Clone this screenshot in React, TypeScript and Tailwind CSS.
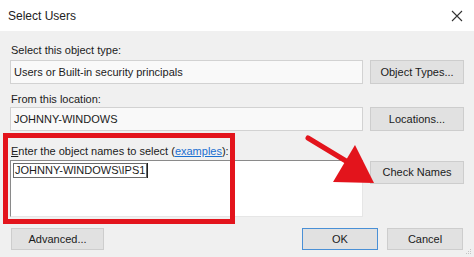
import React from "react";

const font = { fontFamily: '"Liberation Sans", Arial, sans-serif' };

const DialogButton: React.FC<{ label: string; className?: string; primary?: boolean }> = ({
  label,
  className = "",
  primary = false,
}) => (
  <div
    className={`flex items-center justify-center bg-[#e1e1e1] text-[11px] text-[#1b1b1b] border ${
      primary ? "border-[#4a90d6]" : "border-[#cdcdcd]"
    } ${className}`}
  >
    {label}
  </div>
);

const App: React.FC = () => {
  return (
    <div className="relative w-[474px] h-[257px] overflow-hidden bg-[#f0f0f0]" style={font}>
      {/* Title bar */}
      <div className="h-[31px] bg-white flex items-center justify-between pl-[8px] pr-[10px]">
        <span className="text-[12px] text-[#222]">Select Users</span>
        <svg width="12" height="12" viewBox="0 0 12 12" className="mr-[1px]">
          <path d="M1 1 L11 11 M11 1 L1 11" stroke="#333" strokeWidth="1.1" />
        </svg>
      </div>

      {/* Body */}
      <div className="flex flex-col px-[10px] pt-[12px]">
        <div className="h-[14px] leading-[14px] text-[11px] text-[#1b1b1b] pl-[1px]">
          Select this object type:
        </div>
        <div className="mt-[3px] flex gap-[7px] h-[24px]">
          <div className="w-[353px] bg-[#f9f9f9] border border-[#d2d2d2] flex items-center pl-[3px] text-[11px] text-[#1b1b1b]">
            Users or Built-in security principals
          </div>
          <DialogButton label="Object Types..." className="w-[94px]" />
        </div>

        <div className="mt-[8px] h-[14px] leading-[14px] text-[11px] text-[#1b1b1b] pl-[1px]">
          From this location:
        </div>
        <div className="mt-[1px] flex gap-[7px] h-[24px]">
          <div className="w-[353px] bg-[#f9f9f9] border border-[#d2d2d2] flex items-center pl-[3px] text-[11px] text-[#1b1b1b]">
            JOHNNY-WINDOWS
          </div>
          <DialogButton label="Locations..." className="w-[94px]" />
        </div>

        <div className="mt-[13px] h-[14px] leading-[14px] text-[11px] text-[#1b1b1b] pl-[1px]">
          <span className="underline">E</span>nter the object names to select (
          <span className="text-[#1a6fd1] underline">examples</span>):
        </div>
        <div className="mt-[2px] flex gap-[7px] items-start">
          <div className="w-[353px] h-[57px] bg-white border-t border-l border-t-[#8a8a8a] border-l-[#8a8a8a] border-r border-b border-r-[#e6e6e6] border-b-[#e6e6e6] pl-[2px] pt-[2px]">
            <div className="flex items-center">
              <span className="border border-[#6b6b6b] px-[1px] h-[15px] leading-[13px] text-[11px] text-[#1b1b1b]">
                JOHNNY-WINDOWS\IPS1
              </span>
              <span className="w-[1px] h-[15px] bg-[#222]" />
            </div>
          </div>
          <DialogButton label="Check Names" className="w-[94px] h-[23px] mt-[1px]" />
        </div>

        <div className="mt-[11px] flex items-center h-[22px]">
          <DialogButton label="Advanced..." className="w-[93px] h-[22px] ml-[1px]" />
          <div className="flex-1" />
          <DialogButton label="OK" primary className="w-[76px] h-[22px]" />
          <DialogButton label="Cancel" className="w-[76px] h-[22px] ml-[9px] mr-[1px]" />
        </div>
      </div>

      {/* Resize grip */}
      <svg className="absolute right-[2px] bottom-[2px]" width="6" height="6" viewBox="0 0 6 6">
        <rect x="4" y="0" width="1" height="1" fill="#c4c4c4" />
        <rect x="2" y="2" width="1" height="1" fill="#c4c4c4" />
        <rect x="4" y="2" width="1" height="1" fill="#c4c4c4" />
        <rect x="0" y="4" width="1" height="1" fill="#c4c4c4" />
        <rect x="2" y="4" width="1" height="1" fill="#c4c4c4" />
        <rect x="4" y="4" width="1" height="1" fill="#c4c4c4" />
      </svg>

      {/* Red annotation box */}
      <div className="absolute left-[3px] top-[133px] w-[232px] h-[91px] border-[5px] border-[#e3141c] pointer-events-none" />

      {/* Red annotation arrow */}
      <svg className="absolute left-0 top-0 pointer-events-none" width="474" height="257" viewBox="0 0 474 257">
        <line x1="308" y1="138" x2="346" y2="161" stroke="#e3141c" strokeWidth="5" strokeLinecap="round" />
        <polygon points="374,183 333,182 355,145" fill="#e3141c" />
      </svg>
    </div>
  );
};

export default App;
